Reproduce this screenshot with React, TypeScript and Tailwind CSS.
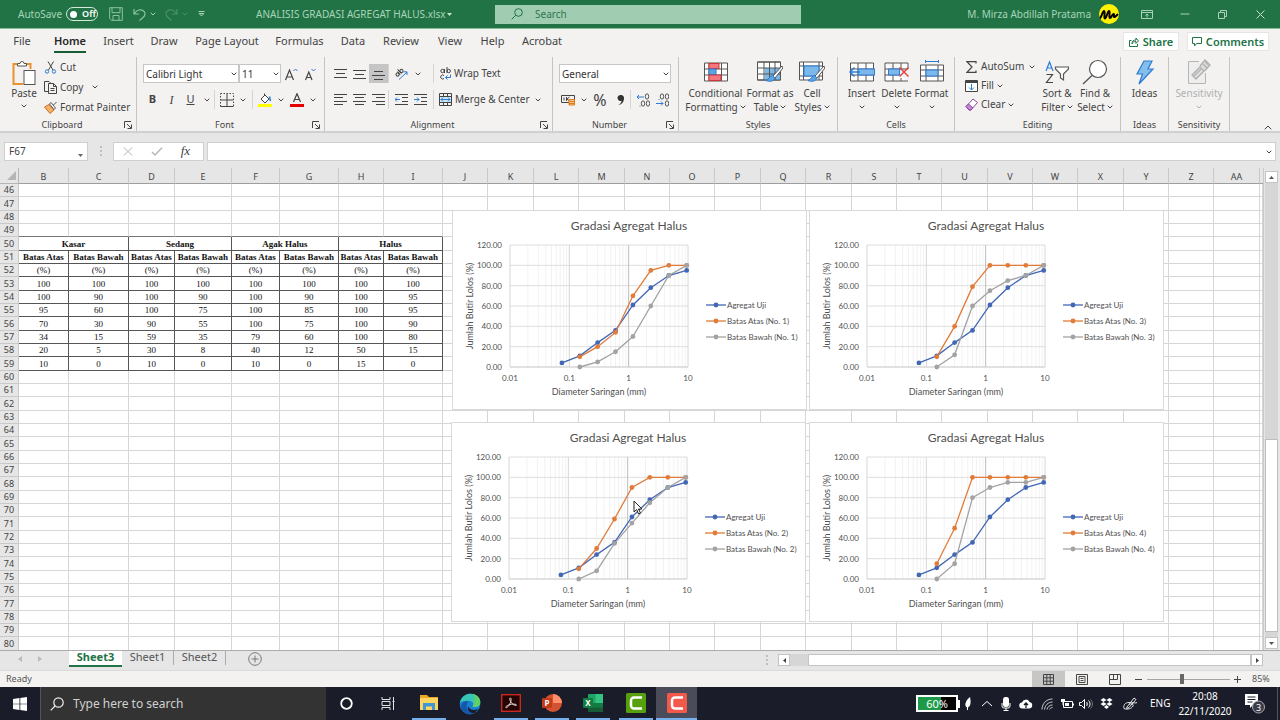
import React from 'react';

type Cell = string | number;

interface Series {
  name: string;
  color: string;
  points: [number, number][];
}

interface ChartDef {
  place: string;
  atas: number[];
  bawah: number[];
  no: number;
}

const SIEVES = [0.15, 0.3, 0.6, 1.18, 2.36, 4.75, 9.5];
const SAMPLE: [number, number][] = [
  [0.075, 4], [0.15, 11], [0.3, 24], [0.6, 36], [1.18, 61], [2.36, 78], [4.75, 90], [9.5, 95],
];

const CHARTS: ChartDef[] = [
  { no: 1, place: 'left-[452px] top-[42px]', atas: [10, 20, 34, 70, 95, 100, 100], bawah: [0, 5, 15, 30, 60, 90, 100] },
  { no: 3, place: 'left-[809px] top-[42px]', atas: [10, 40, 79, 100, 100, 100, 100], bawah: [0, 12, 60, 75, 85, 90, 100] },
  { no: 2, place: 'left-[451px] top-[254px]', atas: [10, 30, 59, 90, 100, 100, 100], bawah: [0, 8, 35, 55, 75, 90, 100] },
  { no: 4, place: 'left-[809px] top-[254px]', atas: [15, 50, 100, 100, 100, 100, 100], bawah: [0, 15, 80, 90, 95, 95, 100] },
];

const COLUMNS = [
  { id: 'B', w: 'w-[50px]' }, { id: 'C', w: 'w-[60px]' }, { id: 'D', w: 'w-[46px]' }, { id: 'E', w: 'w-[57px]' },
  { id: 'F', w: 'w-[48px]' }, { id: 'G', w: 'w-[59px]' }, { id: 'H', w: 'w-[45px]' }, { id: 'I', w: 'w-[59px]' },
  { id: 'J', w: 'w-[45px]' }, { id: 'K', w: 'w-[46px]' }, { id: 'L', w: 'w-[45px]' }, { id: 'M', w: 'w-[46px]' },
  { id: 'N', w: 'w-[45px]' }, { id: 'O', w: 'w-[45px]' }, { id: 'P', w: 'w-[46px]' }, { id: 'Q', w: 'w-[45px]' },
  { id: 'R', w: 'w-[46px]' }, { id: 'S', w: 'w-[45px]' }, { id: 'T', w: 'w-[45px]' }, { id: 'U', w: 'w-[46px]' },
  { id: 'V', w: 'w-[45px]' }, { id: 'W', w: 'w-[45px]' }, { id: 'X', w: 'w-[46px]' }, { id: 'Y', w: 'w-[45px]' },
  { id: 'Z', w: 'w-[45px]' }, { id: 'AA', w: 'w-[46px]' },
];

const FIRST_ROW = 46;
const ROWS = Array.from({ length: 35 }, (_, i) => FIRST_ROW + i);

const DATA: Record<number, Cell[]> = {
  51: ['Batas Atas', 'Batas Bawah', 'Batas Atas', 'Batas Bawah', 'Batas Atas', 'Batas Bawah', 'Batas Atas', 'Batas Bawah'],
  52: ['(%)', '(%)', '(%)', '(%)', '(%)', '(%)', '(%)', '(%)'],
  53: [100, 100, 100, 100, 100, 100, 100, 100],
  54: [100, 90, 100, 90, 100, 90, 100, 95],
  55: [95, 60, 100, 75, 100, 85, 100, 95],
  56: [70, 30, 90, 55, 100, 75, 100, 90],
  57: [34, 15, 59, 35, 79, 60, 100, 80],
  58: [20, 5, 30, 8, 40, 12, 50, 15],
  59: [10, 0, 10, 0, 10, 0, 15, 0],
};

const TABS = [
  { label: 'File', w: 'w-11' }, { label: 'Home', w: 'w-[52px]' }, { label: 'Insert', w: 'w-[45px]' },
  { label: 'Draw', w: 'w-[46px]' }, { label: 'Page Layout', w: 'w-20' }, { label: 'Formulas', w: 'w-[65px]' },
  { label: 'Data', w: 'w-[42px]' }, { label: 'Review', w: 'w-[54px]' }, { label: 'View', w: 'w-11' },
  { label: 'Help', w: 'w-[41px]' }, { label: 'Acrobat', w: 'w-[58px]' },
];

/* ---------- icons ---------- */

const Svg: React.FC<{ w: number; h: number; className?: string; children: React.ReactNode }> = ({ w, h, className, children }) => (
  <svg width={w} height={h} viewBox={`0 0 ${w} ${h}`} fill="none" stroke="#444" strokeWidth="1" className={`shrink-0 ${className || ''}`} aria-hidden="true">
    {children}
  </svg>
);

const Chevron = ({ className }: { className?: string }) => (
  <Svg w={6} h={4} className={className}><path d="M.7 .7 3 3 5.3 .7" stroke="currentColor" /></Svg>
);

const PasteIcon = () => (
  <Svg w={24} h={26}>
    <path d="M5 4H1.500v20H11" stroke="#e8912d" strokeWidth="2" />
    <path d="M14 4h4.500v5" stroke="#e8912d" strokeWidth="2" />
    <path d="M5.500 6V3.500H8a2 2 0 0 1 4 0h2.500V6z" fill="#fff" stroke="#555" />
    <rect x="12" y="10.500" width="11" height="14" fill="#fff" stroke="#555" />
  </Svg>
);

const CutIcon = () => (
  <Svg w={13} h={13}>
    <path d="M4 .5 9 9M9.500 .5 4.500 9" />
    <circle cx="3" cy="10.500" r="1.700" stroke="#2b7cd3" /><circle cx="10" cy="10.500" r="1.700" stroke="#2b7cd3" />
  </Svg>
);

const CopyIcon = () => (
  <Svg w={13} h={13}>
    <path d="M4 10.500H.5V.5H5L6.500 2" />
    <path d="M4.500 2.500h5l3 3v7h-8zM9.500 2.500v3h3M6.500 7.500h4M6.500 9.500h4" />
  </Svg>
);

const PainterIcon = () => (
  <Svg w={13} h={13}>
    <path d="M.5 6 5 3.500l5 5.500-4 3.500z" fill="#f7b066" stroke="#c8702a" />
    <path d="M5.500 3 10 8.500 11.500 7 7 1.500zM9.500 4l3-3" fill="#fff" stroke="#555" />
  </Svg>
);

const AlignLines = ({ lines }: { lines: [number, number, number][] }) => (
  <Svg w={13} h={12}>
    {lines.map(([x, y, len], i) => <path key={i} d={`M${x} ${y}.5h${len}`} />)}
  </Svg>
);

const VTop: [number, number, number][] = [[0, 1, 13], [2, 5, 9], [0, 9, 13]];
const VMid: [number, number, number][] = [[0, 2, 13], [2, 6, 9], [0, 10, 13]];
const VBottom: [number, number, number][] = [[2, 3, 9], [0, 7, 13], [2, 11, 9]];
const HLeft: [number, number, number][] = [[0, 0, 13], [0, 3, 9], [0, 7, 13], [0, 10, 9]];
const HCenter: [number, number, number][] = [[0, 0, 13], [2, 3, 9], [0, 7, 13], [2, 10, 9]];
const HRight: [number, number, number][] = [[0, 0, 13], [4, 3, 9], [0, 7, 13], [4, 10, 9]];

const IndentIcon = ({ flip }: { flip?: boolean }) => (
  <Svg w={13} h={12}>
    <path d="M0 .5h13M7 3.500h6M7 7.500h6M0 10.500h13" />
    <path d={flip ? 'M0 5.500h5M3 3.500l2 2-2 2' : 'M5 5.500H0M2 3.500l-2 2 2 2'} stroke="#2b7cd3" />
  </Svg>
);

const OrientIcon = () => (
  <Svg w={14} h={13}>
    <g transform="rotate(-45 5 6)"><circle cx="3" cy="6" r="1.600" /><path d="M4.800 4v4M6.500 2.500V8" /><circle cx="8.200" cy="6.300" r="1.600" /></g>
    <path d="M5 12.500 13 5M9.500 4.800H13V8" stroke="#2b7cd3" />
  </Svg>
);

const WrapIcon = () => (
  <Svg w={11} h={13}>
    <circle cx="2.500" cy="4" r="1.700" /><path d="M4.500 2v4M7 0v6" /><circle cx="8.700" cy="4" r="1.700" />
    <path d="M4 8.500a2 2 0 1 0 0 3" />
    <path d="M10.500 7.500v3H5.500M7.500 8.500l-2 2 2 2" stroke="#2b7cd3" />
  </Svg>
);

const MergeIcon = () => (
  <Svg w={13} h={13}>
    <path d="M.5 .5h12v12H.5zM.5 3.500h12M.5 9.500h12M4.500 .5v3M8.500 .5v3M4.500 9.500v3M8.500 9.500v3" />
    <rect x="1" y="4" width="11" height="5" fill="#cfe6f8" stroke="none" />
    <path d="M2 6.500h9M4 4.500l-2 2 2 2M9 4.500l2 2-2 2" stroke="#2b7cd3" />
  </Svg>
);

const BordersIcon = () => (
  <Svg w={14} h={14}>
    <path d="M.5 .5h13v13H.5z" strokeDasharray="1.500 1.500" />
    <path d="M7 1v12M1 7h12M.5 13.500h13" />
  </Svg>
);

const FillColorIcon = () => (
  <Svg w={14} h={14}>
    <path d="M3 6 7 2l4 4-4 4zM6.500 3V.5" fill="#fff" />
    <path d="M11.500 3.500 12.500 8" stroke="#2b7cd3" strokeWidth="1.500" />
    <rect x="0" y="11" width="14" height="3" fill="#ff0" stroke="none" />
  </Svg>
);

const FontColorIcon = () => (
  <Svg w={14} h={14}>
    <path d="M3.500 9 7 .7 10.500 9M4.500 6.500h5" strokeWidth="1.200" />
    <rect x="0" y="11" width="14" height="3" fill="#e60000" stroke="none" />
  </Svg>
);

const CurrencyIcon = () => (
  <Svg w={15} h={13}>
    <path d="M.5 2.500h13v7H.5zM3 4.500v3M5.500 4v4M8.500 4 6 6l2.500 2" />
    <path d="M8 6.500h5.500v5.500H8z" fill="#f7c48c" stroke="#e07b1a" /><path d="M8 8.500h5.500M8 10.500h5.500" stroke="#e07b1a" />
  </Svg>
);

const DecimalIcon = ({ less }: { less?: boolean }) => (
  <Svg w={14} h={14}>
    <g strokeWidth=".9">
      {less
        ? <><ellipse cx="7" cy="3.500" rx="1.700" ry="2.700" /><ellipse cx="12" cy="3.500" rx="1.700" ry="2.700" /><ellipse cx="12" cy="10.500" rx="1.700" ry="2.700" /></>
        : <><ellipse cx="11" cy="3.500" rx="1.700" ry="2.700" /><ellipse cx="7" cy="10.500" rx="1.700" ry="2.700" /><ellipse cx="12" cy="10.500" rx="1.700" ry="2.700" /></>}
    </g>
    <path d={less ? 'M1 10.500h7M6 8.500l2 2-2 2M4 6v1' : 'M8 4H1M3 2 1 4l2 2M4 12.500v1'} stroke="#2b7cd3" />
  </Svg>
);

const Brush = () => (
  <g>
    <path d="M25 6 16 16l2 2 8-10z" fill="#fff" stroke="#555" />
    <path d="M15.500 15.500c-3 0-3 4-6.500 5 3 1.500 8 1 9-2.500z" fill="#5ea4e0" stroke="#2b7cd3" />
  </g>
);

const CondIcon = () => (
  <Svg w={24} h={20}>
    <path d="M.5 1h23v18H.5zM.5 7h23M.5 13h23M5 1v18M17.500 1v18" fill="#fff" stroke="#555" />
    <rect x="5" y="1.500" width="10" height="5" fill="#f4777f" stroke="#d13438" />
    <rect x="5" y="7" width="7" height="5.500" fill="#5ea4e0" stroke="#2b7cd3" />
    <rect x="5" y="13" width="12" height="5.500" fill="#f4777f" stroke="#d13438" />
  </Svg>
);

const TableFmtIcon = () => (
  <Svg w={26} h={24}>
    <path d="M.5 2h23v18H.5z" fill="#fff" />
    <rect x="8" y="8" width="15" height="12" fill="#7db8ea" stroke="none" />
    <path d="M.5 2h23v18H.5zM.5 8h23M.5 14h23M7 2v18M12.500 2v18M18 2v18" stroke="#555" />
    <Brush />
  </Svg>
);

const CellStyleIcon = () => (
  <Svg w={26} h={24}>
    <path d="M.5 2h23v18H.5zM.5 6h23M.5 16h23M4.500 2v18M20 2v18" fill="#fff" stroke="#555" />
    <rect x="5" y="6" width="15" height="10" fill="#7db8ea" stroke="#2b7cd3" />
    <Brush />
  </Svg>
);

const InsertIcon = () => (
  <Svg w={26} h={24}>
    <path d="M1.500 3h23v18h-23zM1.500 9h23M1.500 15h23M9 3v18M17 3v18" fill="#fff" stroke="#555" />
    <rect x="9" y="9" width="16.500" height="6" fill="#7db8ea" stroke="#2b7cd3" />
    <path d="M11 12H1M5.500 7.500 1 12l4.500 4.500" stroke="#2b7cd3" strokeWidth="1.500" />
  </Svg>
);

const DeleteIcon = () => (
  <Svg w={26} h={24}>
    <path d="M1 3h23v6M24 21H1V3M1 9h23M1 15h14M9 3v18M17 3v6M17 18v3" fill="#fff" stroke="#555" />
    <rect x="4.500" y="9" width="11" height="6" fill="#7db8ea" stroke="#2b7cd3" />
    <path d="m15.500 7.500 9 9M24.500 7.500l-9 9" stroke="#e03c3c" strokeWidth="1.400" />
  </Svg>
);

const FormatIcon = () => (
  <Svg w={24} h={24}>
    <path d="M.5 5h23v16H.5zM.5 10h23M.5 16h23M6 5v16M18 5v16" fill="#fff" stroke="#555" />
    <rect x="6" y="10" width="12" height="6" fill="#7db8ea" stroke="#2b7cd3" />
    <path d="M5.500 1.500h13M5.500 0v3M18.500 0v3" stroke="#2b7cd3" />
  </Svg>
);

const SortIcon = () => (
  <Svg w={24} h={24}>
    <path d="M1 11 4.500 2 8 11M2 8h5" stroke="#2b7cd3" strokeWidth="1.200" />
    <path d="M1.500 14.500h6L1.500 22.500h6.500" strokeWidth="1.200" />
    <path d="M10.500 7h13v2l-5 5v6l-3-2v-4l-5-5z" fill="#fff" stroke="#555" strokeWidth="1.200" />
  </Svg>
);

const FindIcon = () => (
  <Svg w={26} h={26}>
    <circle cx="16" cy="10" r="8.500" fill="#fff" stroke="#555" strokeWidth="1.200" />
    <path d="M10 16.500 1 25" stroke="#555" strokeWidth="1.300" />
  </Svg>
);

const IdeasIcon = () => (
  <Svg w={20} h={25}>
    <path d="M9 1h8l-4 8h5L4 24l3.500-10H2z" fill="#83beec" stroke="#2b7cd3" strokeWidth="1.200" />
  </Svg>
);

const SensitivityIcon = () => (
  <Svg w={24} h={26}>
    <path d="M12 2.500H1.500v22h17V14" fill="#eee" stroke="#b5b5b5" />
    <path d="m5 16 8-8 4 4-8 8zM13 7l5-6 5 5-5.500 6" fill="#ddd" stroke="#b0b0b0" strokeWidth="1.300" />
    <path d="m7 17 7-7M16 5l4 4M18 2.500l3.500 3.500" stroke="#b0b0b0" strokeWidth="1.300" />
  </Svg>
);

const EraserIcon = () => (
  <Svg w={13} h={13}>
    <path d="M1 8.500 8 1l4.500 3.500L6 12H4z" fill="#fff" stroke="#8a4b9c" />
    <path d="M1 8.500 3.500 6l4.500 4L6 12H4z" fill="#c586d6" stroke="#8a4b9c" />
  </Svg>
);

const FillDownIcon = () => (
  <Svg w={13} h={12}>
    <path d="M.5 .5h12v11H.5z" fill="#fff" /><path d="M.5 2h12" strokeWidth="2" />
    <path d="M6.500 4v6M4 7.500 6.500 10 9 7.500" stroke="#2b7cd3" />
  </Svg>
);

const LauncherIcon = () => (
  <Svg w={8} h={8}><path d="M.5 7V.5H7M3 3l4 4M7.500 3.500v4h-4" /></Svg>
);

/* ---------- ribbon pieces ---------- */

const Group: React.FC<{ title: string; w: string; launcher?: boolean; children: React.ReactNode }> = ({ title, w, launcher, children }) => (
  <section className={`${w} shrink-0 flex flex-col border-r border-[#c4c4c4]`} aria-label={title}>
    <div className="h-[63px] flex items-start">{children}</div>
    <div className="pt-px flex items-center text-[9px] leading-3 text-[#444]">
      <span className="flex-1 text-center">{title}</span>
      {launcher && <button className="w-3" aria-label={`${title} settings`}><LauncherIcon /></button>}
    </div>
  </section>
);

const BigButton: React.FC<{ w: string; icon: React.ReactNode; lines: string[]; disabled?: boolean }> = ({ w, icon, lines, disabled }) => (
  <button className={`${w} shrink-0 flex flex-col items-center pt-px whitespace-nowrap leading-[14px] ${disabled ? 'text-[#b0b0b0]' : ''}`} disabled={disabled}>
    <span className="h-7 flex items-center justify-center">{icon}</span>
    <span>{lines[0]}</span>
    <span className="h-[13px] flex items-center gap-[2px]">{lines[1]}<Chevron /></span>
  </button>
);

const SmallButton: React.FC<{ icon: React.ReactNode; label: string; arrow?: string; h?: string }> = ({ icon, label, arrow, h }) => (
  <button className={`${h || 'h-5'} flex items-center gap-[3px] whitespace-nowrap`}>
    <span className="w-[13px] flex justify-center">{icon}</span>
    {label}
    {arrow && <Chevron className={arrow} />}
  </button>
);

const IconButton: React.FC<{ label: string; w?: string; children: React.ReactNode }> = ({ label, w, children }) => (
  <button className={`${w || 'w-[19px]'} h-[19px] shrink-0 flex items-center justify-center`} aria-label={label}>{children}</button>
);

const Sep = () => <span className="w-px h-[19px] bg-[#d4d4d4] shrink-0" />;

const Picker: React.FC<{ label: string; value: string; w: string }> = ({ label, value, w }) => (
  <div className={`${w} relative shrink-0`}>
    <select aria-label={label} className="w-full h-[19px] appearance-none bg-white border border-[#c6c6c6] pl-[2px] text-[10px] leading-4 text-[#333]">
      <option>{value}</option>
    </select>
    <Chevron className="absolute right-[2px] top-2 pointer-events-none" />
  </div>
);

const BigIdeas = () => (
  <button className="w-full flex flex-col items-center pt-px leading-[14px]">
    <span className="h-7 flex items-center"><IdeasIcon /></span>
    Ideas
  </button>
);

const Ribbon = () => (
  <div className="bg-[#f3f2f1] h-[79px] pt-[3px] flex text-[10px] text-[#444] border-b-2 border-[#d0d0d0] overflow-hidden">
    <Group title="Clipboard" w="w-[137px]" launcher>
      <button className="ml-3 w-6 pt-[3px] flex flex-col items-center leading-[14px]">
        <PasteIcon />
        Paste
        <Chevron className="mt-1" />
      </button>
      <div className="ml-2 flex flex-col items-start">
        <SmallButton icon={<CutIcon />} label="Cut" />
        <SmallButton icon={<CopyIcon />} label="Copy" arrow="ml-[6px]" />
        <SmallButton icon={<PainterIcon />} label="Format Painter" />
      </div>
    </Group>

    <Group title="Font" w="w-[188px]" launcher>
      <div className="pl-[6px] pt-[7px] flex flex-col gap-[7px]">
        <div className="flex items-center">
          <Picker label="Font name" value="Calibri Light" w="w-24" />
          <Picker label="Font size" value="11" w="w-[42px]" />
          <IconButton label="Grow font">
            <Svg w={14} h={14}><path d="M1.500 13 5.500 3l4 10M2.800 10h5.400" strokeWidth="1.200" /><path d="m9.500 4 2-2 2 2" stroke="#2b7cd3" /></Svg>
          </IconButton>
          <IconButton label="Shrink font">
            <Svg w={12} h={14}><path d="M1.500 13 4.800 5 8 13M2.600 10.500h4.400" strokeWidth="1.200" /><path d="m7.500 2 2 2 2-2" stroke="#2b7cd3" /></Svg>
          </IconButton>
        </div>
        <div className="flex items-center text-[11px]">
          <IconButton label="Bold"><b>B</b></IconButton>
          <IconButton label="Italic"><i className="font-['Liberation_Serif',serif] text-xs">I</i></IconButton>
          <IconButton label="Underline"><u>U</u></IconButton>
          <IconButton label="Underline style" w="w-[14px]"><Chevron /></IconButton>
          <Sep />
          <IconButton label="Borders" w="w-[23px]"><BordersIcon /></IconButton>
          <IconButton label="Border style" w="w-[10px]"><Chevron /></IconButton>
          <span className="w-1" />
          <Sep />
          <IconButton label="Fill colour" w="w-[23px]"><FillColorIcon /></IconButton>
          <IconButton label="Fill colour list" w="w-[10px]"><Chevron /></IconButton>
          <IconButton label="Font colour" w="w-[22px]"><FontColorIcon /></IconButton>
          <IconButton label="Font colour list" w="w-[10px]"><Chevron /></IconButton>
        </div>
      </div>
    </Group>

    <Group title="Alignment" w="w-[228px]" launcher>
      <div className="pl-[6px] pt-[7px] flex flex-col gap-[7px]">
        <div className="flex items-center">
          <IconButton label="Top align"><AlignLines lines={VTop} /></IconButton>
          <IconButton label="Middle align"><AlignLines lines={VMid} /></IconButton>
          <span className="bg-[#c5c5c5]"><IconButton label="Bottom align"><AlignLines lines={VBottom} /></IconButton></span>
          <Sep />
          <IconButton label="Orientation" w="w-6"><OrientIcon /></IconButton>
          <IconButton label="Orientation list" w="w-[10px]"><Chevron /></IconButton>
          <span className="w-[10px]" />
          <Sep />
          <button className="ml-[6px] flex items-center gap-[3px] whitespace-nowrap"><WrapIcon />Wrap Text</button>
        </div>
        <div className="flex items-center">
          <IconButton label="Align left"><AlignLines lines={HLeft} /></IconButton>
          <IconButton label="Align centre"><AlignLines lines={HCenter} /></IconButton>
          <IconButton label="Align right"><AlignLines lines={HRight} /></IconButton>
          <Sep />
          <IconButton label="Decrease indent" w="w-6"><IndentIcon /></IconButton>
          <IconButton label="Increase indent" w="w-[14px]"><IndentIcon flip /></IconButton>
          <span className="w-[6px]" />
          <Sep />
          <button className="ml-[5px] flex items-center gap-[3px] whitespace-nowrap"><MergeIcon />Merge &amp; Center<Chevron className="ml-[2px]" /></button>
        </div>
      </div>
    </Group>

    <Group title="Number" w="w-[126px]" launcher>
      <div className="pl-[6px] pt-[7px] flex flex-col gap-[7px]">
        <Picker label="Number format" value="General" w="w-28" />
        <div className="flex items-center">
          <IconButton label="Accounting format"><CurrencyIcon /></IconButton>
          <IconButton label="Accounting list" w="w-[11px]"><Chevron /></IconButton>
          <IconButton label="Percent" w="w-[22px]"><span className="text-base leading-4">%</span></IconButton>
          <IconButton label="Comma">
            <Svg w={8} h={12}><path d="M4 1a3 3 0 1 0 .5 5.800C4.500 8.500 3.500 10 1.500 11 5 10.500 7 7.500 7 4.500A3 3 0 0 0 4 1z" fill="#333" stroke="none" /></Svg>
          </IconButton>
          <Sep />
          <IconButton label="Increase decimal" w="w-6"><DecimalIcon /></IconButton>
          <IconButton label="Decrease decimal" w="w-[14px]"><DecimalIcon less /></IconButton>
        </div>
      </div>
    </Group>

    <Group title="Styles" w="w-[159px]">
      <BigButton w="w-[73px]" icon={<CondIcon />} lines={['Conditional', 'Formatting']} />
      <BigButton w="w-9" icon={<TableFmtIcon />} lines={['Format as', 'Table']} />
      <BigButton w="w-12" icon={<CellStyleIcon />} lines={['Cell', 'Styles']} />
    </Group>

    <Group title="Cells" w="w-[117px]">
      <span className="w-[6px]" />
      <BigButton w="w-[35px]" icon={<InsertIcon />} lines={['Insert', '']} />
      <BigButton w="w-[35px]" icon={<DeleteIcon />} lines={['Delete', '']} />
      <BigButton w="w-[35px]" icon={<FormatIcon />} lines={['Format', '']} />
    </Group>

    <Group title="Editing" w="w-[166px]">
      <div className="w-[80px] pl-[10px] flex flex-col items-start">
        <SmallButton h="h-[19px]" label="AutoSum" arrow="ml-[2px]" icon={<Svg w={11} h={12}><path d="M10 2.500V.6H1L6 6l-5 5.400h9V9.500" strokeWidth="1.200" /></Svg>} />
        <SmallButton h="h-[19px]" label="Fill" icon={<FillDownIcon />} arrow="ml-0" />
        <SmallButton h="h-[19px]" label="Clear" icon={<EraserIcon />} arrow="ml-0" />
      </div>
      <BigButton w="w-11" icon={<SortIcon />} lines={['Sort &', 'Filter']} />
      <BigButton w="w-8" icon={<FindIcon />} lines={['Find &', 'Select']} />
    </Group>

    <Group title="Ideas" w="w-12">
      <BigIdeas />
    </Group>

    <Group title="Sensitivity" w="w-[61px]">
      <BigButton w="w-[60px]" icon={<SensitivityIcon />} lines={['Sensitivity', '']} disabled />
    </Group>

    <button className="ml-auto self-end mr-2 mb-px" aria-label="Collapse ribbon">
      <Svg w={8} h={5}><path d="m.7 4.300 3.300-3.300 3.300 3.300" /></Svg>
    </button>
  </div>
);

/* ---------- window chrome ---------- */

const TitleBar = () => (
  <header className="h-7 bg-[#217346] text-[#a9d3b9] text-[10px] flex items-center">
    <label className="ml-[18px] flex items-center gap-1">
      <span>AutoSave</span>
      <span className="relative w-8 h-[14px] rounded-full border border-[#d5eadd] flex items-center text-white">
        <input type="checkbox" className="absolute inset-0 opacity-0" />
        <span className="ml-[3px] w-[7px] h-[7px] rounded-full bg-white" />
        <span className="ml-[5px] text-[9px] leading-3 font-semibold">Off</span>
      </span>
    </label>
    <button className="ml-[11px]" aria-label="Save">
      <Svg w={14} h={14}><path d="M.7 .7h12.600v12.600H2.500L.7 11.500zM3 .7v5h8v-5M4 13v-4.500h6V13" stroke="#8cc3a0" /></Svg>
    </button>
    <button className="ml-[10px] flex items-center gap-1" aria-label="Undo">
      <Svg w={13} h={13}><path d="M1 1v5h5M1.500 5.500C4 1.500 8 1 10.500 3s1.500 5-.5 6.500L6.500 12.500" stroke="#8cc3a0" strokeWidth="1.200" /></Svg>
      <Chevron />
    </button>
    <button className="ml-[9px] flex items-center gap-1 text-[#4b9168]" aria-label="Redo">
      <Svg w={13} h={13}><path d="M12 1v5H7M11.500 5.500C9 1.500 5 1 2.500 3S1 8 3 9.500l3.500 3" stroke="#4b9168" strokeWidth="1.200" /></Svg>
      <Chevron />
    </button>
    <button className="ml-[10px]" aria-label="Customise toolbar">
      <Svg w={7} h={6}><path d="M.5 .5h6M1.200 2.500h4.600L3.500 5z" stroke="#a9d3b9" /></Svg>
    </button>
    <div className="ml-[51px] w-[196px] flex items-center justify-between whitespace-nowrap">
      <span>ANALISIS GRADASI AGREGAT HALUS.xlsx</span>
      <Svg w={5} h={3}><path d="M0 0h5L2.500 3z" fill="#c5e3d0" stroke="none" /></Svg>
    </div>
    <label className="ml-[43px] w-[306px] h-[19px] bg-[#a0ccb1] flex items-center pl-4">
      <Svg w={12} h={12}><circle cx="7.500" cy="4.500" r="3.800" stroke="#217346" /><path d="M4.700 7.300 .7 11.300" stroke="#217346" /></Svg>
      <input className="ml-3 flex-1 min-w-0 bg-transparent outline-none placeholder:text-[#30774f] placeholder:opacity-100" placeholder="Search" aria-label="Search" />
    </label>
    <div className="ml-auto flex items-center">
      <span className="whitespace-nowrap">M. Mirza Abdillah Pratama</span>
      <Svg w={20} h={20} className="ml-2">
        <circle cx="10" cy="10" r="10" fill="#fff200" stroke="none" />
        <path d="M1 14.500C3 12 3.500 7 5 7s-.5 7.500 1 7.500S8.500 7 10 7s-.5 7 1 7 2-4 3.500-4-.5 3.500 1 3 2-1.500 3.500-3" stroke="#000" strokeWidth="2" />
      </Svg>
      <button className="ml-[22px] w-3" aria-label="Ribbon display options">
        <Svg w={12} h={9}><path d="M.5 .5h11v8H.5zM.5 2.500h11M6 7.500V4M4.500 5.500 6 4l1.500 1.500" stroke="#a9d3b9" /></Svg>
      </button>
      <button className="ml-[27px] w-[10px]" aria-label="Minimise"><Svg w={10} h={2}><path d="M.5 1h9" stroke="#a9d3b9" /></Svg></button>
      <button className="ml-[28px] w-[9px]" aria-label="Restore"><Svg w={9} h={9}><path d="M.5 2.500h6v6h-6zM2.500 2.500v-2h6v6h-2" stroke="#a9d3b9" /></Svg></button>
      <button className="ml-[29px] mr-[15px] w-[9px]" aria-label="Close"><Svg w={9} h={9}><path d="m.5 .5 8 8M8.500 .5l-8 8" stroke="#c5e3d0" /></Svg></button>
    </div>
  </header>
);

const TabBar = () => (
  <nav className="h-[26px] bg-[#f3f2f1] border-t border-[#8dbb9e] flex items-center text-[11px] leading-[18px] text-[#444]">
    {TABS.map(t => (
      <button key={t.label} className={`${t.w} h-full flex justify-center whitespace-nowrap`}>
        <span className={t.label === 'Home' ? 'h-6 pt-[3px] font-semibold text-[#262626] border-b-2 border-[#185c37]' : 'h-6 pt-[3px]'}>{t.label}</span>
      </button>
    ))}
    <div className="ml-auto mr-[11px] flex gap-2 font-semibold text-[#217346]">
      <button className="w-[56px] h-[19px] bg-white border border-[#e5e5e5] flex items-center justify-center gap-1">
        <Svg w={10} h={10}><path d="M2.500 3.500h-2v6h8V7M3 7c0-3 1.500-4 4-4V1l2.500 3L7 6.500v-2C5 4.500 4 5 3 7z" stroke="#217346" /></Svg>
        Share
      </button>
      <button className="w-[82px] h-[19px] bg-white border border-[#e5e5e5] flex items-center justify-center gap-1">
        <Svg w={10} h={10}><path d="M.5 .5h9v6H4.500l-2 2.500V6.500h-2z" stroke="#217346" /></Svg>
        Comments
      </button>
    </div>
  </nav>
);

const FormulaBar = () => (
  <div className="h-[35px] bg-[#e6e6e6] flex items-center pl-1 pr-1 pt-px text-[11px] text-[#444]">
    <div className="relative w-[84px]">
      <input className="w-full h-[19px] bg-white border border-[#cfcfcf] pl-1 text-[10px] outline-none" defaultValue="F67" aria-label="Name box" />
      <Svg w={5} h={3} className="absolute right-[5px] top-3"><path d="M0 0h5L2.500 3z" fill="#666" stroke="none" /></Svg>
    </div>
    <Svg w={2} h={10} className="ml-3"><path d="M1 0v10" stroke="#999" strokeDasharray="2 2" /></Svg>
    <div className="ml-[11px] w-[91px] h-[19px] bg-white border border-[#cfcfcf] flex items-center justify-around pr-1">
      <button aria-label="Cancel"><Svg w={10} h={9}><path d="m.7 .5 8.600 8M9.300 .5l-8.600 8" stroke="#b5b5b5" /></Svg></button>
      <button aria-label="Enter"><Svg w={12} h={9}><path d="m1 5 3 3L11 .7" stroke="#b5b5b5" strokeWidth="1.400" /></Svg></button>
      <button className="font-['Liberation_Serif',serif] italic text-[13px] leading-4" aria-label="Insert function">fx</button>
    </div>
    <div className="relative ml-[3px] flex-1">
      <input className="block w-full h-[19px] bg-white border border-[#cfcfcf] outline-none" aria-label="Formula" />
      <Chevron className="absolute right-1 top-2" />
    </div>
  </div>
);

/* ---------- sheet ---------- */

const PLOT = { left: 58, right: 236, top: 35, bottom: 157 };
const DECADE = (PLOT.right - PLOT.left) / 3;
const px = (v: number) => PLOT.left + (Math.log10(v) + 2) * DECADE;
const py = (v: number) => PLOT.bottom - (v / 120) * (PLOT.bottom - PLOT.top);

const GradationChart: React.FC<{ def: ChartDef }> = ({ def }) => {
  const series: Series[] = [
    { name: 'Agregat Uji', color: '#4267b5', points: SAMPLE },
    { name: `Batas Atas (No. ${def.no})`, color: '#e07b39', points: SIEVES.map((s, i) => [s, def.atas[i]]) },
    { name: `Batas Bawah (No. ${def.no})`, color: '#a3a3a3', points: SIEVES.map((s, i) => [s, def.bawah[i]]) },
  ];
  const minors = [0.01, 0.1, 1].flatMap(d => [2, 3, 4, 5, 6, 7, 8, 9].map(m => d * m));

  return (
    <svg width="355" height="200" viewBox="1 1 353 198" className={`absolute ${def.place} bg-white border border-[#d9d9d9] font-['Lato',sans-serif] text-[8px]`} fill="#505050">
      <text x="177" y="20" textAnchor="middle" className="text-[12px]">Gradasi Agregat Halus</text>
      {minors.map(m => <path key={m} d={`M${px(m)} ${PLOT.top}V${PLOT.bottom}`} stroke="#f2f2f2" />)}
      {[0, 20, 40, 60, 80, 100, 120].map(v => (
        <g key={v}>
          <path d={`M${PLOT.left} ${py(v)}H${PLOT.right}`} stroke={v === 0 ? '#c4c4c4' : '#dedede'} />
          <text x="50" y={py(v) + 3} textAnchor="end">{v.toFixed(2)}</text>
        </g>
      ))}
      {[0.01, 0.1, 1, 10].map(v => (
        <g key={v}>
          <path d={`M${px(v)} ${PLOT.top}V${PLOT.bottom}`} stroke={v === 1 ? '#bdbdbd' : '#d6d6d6'} />
          <text x={px(v)} y="171" textAnchor="middle">{v}</text>
        </g>
      ))}
      {series.map((s, i) => (
        <g key={s.name}>
          <polyline points={s.points.map(([x, y]) => `${px(x)},${py(y)}`).join(' ')} fill="none" stroke={s.color} strokeWidth="1.300" />
          {s.points.map(([x, y]) => <circle key={x} cx={px(x)} cy={py(y)} r="2.400" fill={s.color} />)}
          <path d={`M254 ${95 + i * 16}h20`} stroke={s.color} strokeWidth="1.300" />
          <circle cx="264" cy={95 + i * 16} r="2.400" fill={s.color} />
          <text x="275" y={98 + i * 16}>{s.name}</text>
        </g>
      ))}
      <text x="147" y="185" textAnchor="middle" className="text-[9px]">Diameter Saringan (mm)</text>
      <text transform="translate(21 96) rotate(-90)" textAnchor="middle" className="text-[9px]">Jumlah Butir Lolos (%)</text>
    </svg>
  );
};

const SheetRow: React.FC<{ row: number }> = ({ row }) => {
  const values = DATA[row];
  const ruled = row >= 50 && row <= 59;
  // 85% zoom puts a row at 13 1/3 px, so every third one is a pixel taller
  const height = (row - FIRST_ROW) % 3 === 1 ? 'h-[14px]' : 'h-[13px]';

  return (
    <tr className={height}>
      <th scope="row" className="bg-[#e6e6e6] border-r border-b border-[#c9c9c9] font-normal text-[9px] leading-3 text-[#444] font-['Noto_Sans',sans-serif]">{row}</th>
      {row === 50 && ['Kasar', 'Sedang', 'Agak Halus', 'Halus'].map(name => (
        <th key={name} colSpan={2} className="border-r border-b border-[#555]">{name}</th>
      ))}
      {row !== 50 && COLUMNS.slice(0, 8).map((c, i) => (
        <td
          key={c.id}
          className={ruled
            ? `border-r border-b border-[#555] whitespace-nowrap ${row === 51 ? 'font-bold' : ''}`
            : `border-r border-b border-r-[#d6d6d6] ${row === 49 ? 'border-b-[#777]' : 'border-b-[#d6d6d6]'}`}
        >
          {values && values[i]}
        </td>
      ))}
      {COLUMNS.slice(8).map(c => <td key={c.id} className="border-r border-b border-[#d6d6d6]" />)}
      <td className="border-r border-b border-[#d6d6d6]" />
    </tr>
  );
};

const Sheet = () => (
  <main className="flex-1 flex bg-[#e6e6e6]">
    <div className="relative flex-1 min-w-0 overflow-hidden bg-white">
      <table className="w-full -mb-px table-fixed border-separate border-spacing-0 text-center font-['Liberation_Serif',serif] text-[9px] leading-3 text-[#111]">
        <colgroup>
          <col className="w-[19px]" />
          {COLUMNS.map(c => <col key={c.id} className={c.w} />)}
          <col />
        </colgroup>
        <thead>
          <tr className="h-4 bg-[#e6e6e6] font-['Noto_Sans',sans-serif] text-[#444]">
            <th className="border-r border-b border-[#b5b5b5]" aria-label="Select all">
              <Svg w={9} h={9} className="ml-auto mr-[2px]"><path d="M9 0v9H0z" fill="#b5b5b5" stroke="none" /></Svg>
            </th>
            {COLUMNS.map(c => <th key={c.id} scope="col" className="border-r border-b border-r-[#c9c9c9] border-b-[#9e9e9e] font-normal pt-[3px]">{c.id}</th>)}
            <th className="border-b border-[#9e9e9e]" />
          </tr>
        </thead>
        <tbody>
          {ROWS.map(r => <SheetRow key={r} row={r} />)}
        </tbody>
      </table>
      {CHARTS.map(c => <GradationChart key={c.no} def={c} />)}
      <Svg w={10} h={15} className="absolute left-[633px] top-[332px]">
        <path d="M1 1v11l2.700-2.500L5.500 14l2-1-2-4H9z" fill="#fff" stroke="#222" />
      </Svg>
    </div>
    <div className="w-[17px] pt-[3px] pl-px pr-[2px] flex flex-col border-l border-[#c9c9c9]">
      <button className="h-3 bg-white border border-[#c4c4c4] flex items-center justify-center" aria-label="Scroll up">
        <Svg w={5} h={3}><path d="M0 3h5L2.500 0z" fill="#555" stroke="none" /></Svg>
      </button>
      <div className="flex-1 bg-[#d6d6d6] flex flex-col pt-[256px]">
        <div className="h-[193px] bg-white border border-[#bdbdbd]" />
      </div>
      <button className="h-3 mb-px bg-white border border-[#c4c4c4] flex items-center justify-center" aria-label="Scroll down">
        <Svg w={5} h={3}><path d="M0 0h5L2.500 3z" fill="#555" stroke="none" /></Svg>
      </button>
    </div>
  </main>
);

const SheetTabs = () => (
  <div className="h-5 bg-[#e6e6e6] border-t border-[#ababab] flex items-start text-[11px] leading-3 text-[#555]">
    <div className="w-[69px] h-4 flex items-center pl-[18px] gap-4">
      <Svg w={4} h={6}><path d="M4 0v6L0 3z" fill="#bbb" stroke="none" /></Svg>
      <Svg w={4} h={6}><path d="M0 0v6l4-3z" fill="#bbb" stroke="none" /></Svg>
    </div>
    <button className="w-[53px] h-4 pb-[2px] bg-white border-b-2 border-[#217346] font-bold text-[#217346]">Sheet3</button>
    <button className="w-[52px] h-[14px] pb-[2px] border-r border-[#ababab]">Sheet1</button>
    <button className="w-[52px] h-[14px] pb-[2px] border-r border-[#ababab]">Sheet2</button>
    <button className="ml-[22px] mt-px" aria-label="New sheet">
      <Svg w={14} h={14}><circle cx="7" cy="7" r="6.300" stroke="#777" /><path d="M7 3.500v7M3.500 7h7" stroke="#777" /></Svg>
    </button>
    <div className="ml-auto mr-[17px] h-[18px] flex items-center">
      <Svg w={2} h={10}><path d="M1 0v10" stroke="#999" strokeDasharray="2 2" /></Svg>
      <button className="ml-[10px] w-3 h-3 bg-white border border-[#c4c4c4] flex items-center justify-center" aria-label="Scroll left">
        <Svg w={3} h={5}><path d="M3 0v5L0 2.500z" fill="#444" stroke="none" /></Svg>
      </button>
      <div className="w-[461px] h-3 bg-[#d6d6d6] pl-[18px]"><div className="h-full bg-white border border-[#c4c4c4]" /></div>
      <button className="w-3 h-3 bg-white border border-[#c4c4c4] flex items-center justify-center" aria-label="Scroll right">
        <Svg w={3} h={5}><path d="M0 0v5l3-2.500z" fill="#444" stroke="none" /></Svg>
      </button>
    </div>
  </div>
);

const StatusBar = () => (
  <div className="h-[17px] bg-[#f3f2f1] border-t border-[#dadada] flex items-center text-[9px] text-[#555]">
    <span className="ml-[6px]">Ready</span>
    <div className="ml-auto flex items-center h-full">
      <button className="w-[33px] h-full bg-[#c6c6c6] flex items-center justify-center" aria-label="Normal view">
        <Svg w={11} h={11}><path d="M.5 .5h10v10H.5zM.5 3.800h10M.5 7.200h10M3.800 .5v10M7.200 .5v10" /></Svg>
      </button>
      <button className="w-[34px] flex justify-center" aria-label="Page layout view">
        <Svg w={12} h={11}><path d="M.5 .5h11v10H.5zM3 2.500h6v6H3zM4.500 4.500h3M4.500 6.500h3" /></Svg>
      </button>
      <button className="w-8 flex justify-center" aria-label="Page break view">
        <Svg w={12} h={11}><path d="M.5 .5h11v10H.5zM4.500 .5v5M8.500 .5v5M.5 5.500h8" /></Svg>
      </button>
      <button className="ml-1 w-[7px]" aria-label="Zoom out"><Svg w={7} h={7}><path d="M0 3.500h7" /></Svg></button>
      <label className="relative ml-[5px] w-[83px] h-[10px] flex items-center">
        <input type="range" min="10" max="160" defaultValue="73" className="absolute inset-0 w-full opacity-0" aria-label="Zoom" />
        <span className="w-full h-px bg-[#a5a5a5]" />
        <span className="absolute left-[33px] top-0 w-1 h-[10px] bg-[#666]" />
      </label>
      <button className="ml-1 w-[7px]" aria-label="Zoom in"><Svg w={7} h={7}><path d="M0 3.500h7M3.500 0v7" /></Svg></button>
      <span className="ml-[11px] w-[28px]">85%</span>
    </div>
  </div>
);

/* ---------- taskbar ---------- */

const TaskApp: React.FC<{ label: string; running?: boolean; active?: boolean; children: React.ReactNode }> = ({ label, running, active, children }) => (
  <button className={`w-[41px] h-full flex flex-col items-center ${active ? 'bg-[#4b4c5a]' : ''}`} aria-label={label}>
    <span className="flex-1 flex items-center">{children}</span>
    {running && <span className={`h-[2px] bg-[#76b0ec] ${active ? 'w-full' : 'w-[34px]'}`} />}
  </button>
);

const Camtasia = ({ color }: { color: string }) => (
  <Svg w={20} h={20}>
    <rect width="20" height="20" rx="1.500" fill={color} stroke="none" />
    <path d="M16 4.500H8A3 3 0 0 0 5 7.500v5a3 3 0 0 0 3 3h8" stroke="#fff" strokeWidth="2.500" />
  </Svg>
);

const Taskbar = () => (
  <footer className="h-[33px] bg-[#1a1d29] text-white flex items-center">
    <button className="w-10 h-full flex items-center justify-center" aria-label="Start">
      <Svg w={14} h={14}><path d="M0 2 6.500 1v5.700H0zM7.300 .9 14 0v6.700H7.300zM0 7.300h6.500V13L0 12zM7.300 7.300H14V14l-6.700-.9z" fill="#fff" stroke="none" /></Svg>
    </button>
    <label className="w-[286px] h-full bg-[#333334] border-l border-[#555] flex items-center pl-[9px]">
      <Svg w={14} h={14}><circle cx="8.500" cy="5.500" r="4.700" stroke="#eee" strokeWidth="1.200" /><path d="M5 9 .7 13.300" stroke="#eee" strokeWidth="1.200" /></Svg>
      <input className="ml-[9px] flex-1 min-w-0 bg-transparent outline-none text-xs placeholder:text-[#d0d0d0] placeholder:opacity-100" placeholder="Type here to search" aria-label="Type here to search" />
    </label>
    <button className="w-[41px] h-full flex items-center justify-center" aria-label="Cortana">
      <Svg w={13} h={13}><circle cx="6.500" cy="6.500" r="5.300" stroke="#fff" strokeWidth="1.800" /></Svg>
    </button>
    <button className="w-[41px] h-full flex items-center justify-center" aria-label="Task view">
      <Svg w={14} h={13}><path d="M1 0v2.500h8V0M1 13v-2.500h8V13M1 4.500h8v4H1zM12.500 0v13M11.500 4.500h2" stroke="#e5e5e5" /></Svg>
    </button>
    <TaskApp label="File Explorer" running>
      <Svg w={20} h={17}>
        <path d="M1 1h7l2 2h9v13H1z" fill="#e9a825" stroke="none" /><path d="M1 4h18v12H1z" fill="#fcd462" stroke="none" />
        <path d="M4 16V9h12v7h-3v-3.500H7V16z" fill="#3f97d6" stroke="none" />
      </Svg>
    </TaskApp>
    <TaskApp label="Edge">
      <Svg w={22} h={22}>
        <circle cx="11" cy="11" r="10.300" fill="#1b7fd1" stroke="none" />
        <path d="M1 10C2 3 8 .5 12 .8c6 .5 9.500 5 9.300 9-.3 4-5 5.200-7.800 3.700 1.500-2 .8-5-2.500-5.500C7 7.500 2.500 8 1 10z" fill="#38c6b4" stroke="none" />
        <path d="M14 1c5 .8 7.600 5 7.300 8.800-.3 4-5 5.200-7.800 3.700C16 10 17 5 14 1z" fill="#5fd068" stroke="none" />
        <path d="M8 11c-1.500 4 2 8.500 7 9.400-6 2.500-12-1-13-7C3 9 6 8 9.500 8.300 8.700 9 8.300 10 8 11z" fill="#1557a8" stroke="none" />
        <path d="M9.500 13c0 3.500 5 5 9.500 3-1 2-2.500 3.500-4 4.400-5-.4-7-4.400-5.500-7.400z" fill="#1a1d29" stroke="none" />
      </Svg>
    </TaskApp>
    <TaskApp label="Acrobat" running>
      <Svg w={20} h={18}>
        <rect x=".7" y=".7" width="18.600" height="16.600" fill="#260404" stroke="#c8281e" strokeWidth="1.400" />
        <path d="M9.300 4c1.500 0 .8 3.500-.5 6s-3.300 4.500-4 3.500 3-3 5.500-3.300 5.500 0 5.200 1-4-.5-5.500-3S8.300 4 9.300 4z" stroke="#f3e5e5" strokeWidth=".9" />
      </Svg>
    </TaskApp>
    <TaskApp label="PowerPoint" running>
      <Svg w={20} h={20}>
        <circle cx="11" cy="10" r="9" fill="#d35230" stroke="none" /><path d="M11 1a9 9 0 0 1 9 9h-9z" fill="#ff8f6b" stroke="none" />
        <rect x="0" y="5" width="10" height="10" rx="1" fill="#c13b1b" stroke="none" />
        <text x="5" y="13" textAnchor="middle" fill="#fff" stroke="none" className="text-[8px] font-bold">P</text>
      </Svg>
    </TaskApp>
    <TaskApp label="Excel" running>
      <Svg w={20} h={18}>
        <rect x="5" y="0" width="15" height="18" rx="1" fill="#21a366" stroke="none" /><rect x="12.500" y="0" width="7.500" height="9" fill="#33c481" stroke="none" />
        <rect x="5" y="9" width="15" height="9" fill="#107c41" stroke="none" /><rect x="5" y="13.500" width="15" height="4.500" fill="#185c37" stroke="none" />
        <rect x="0" y="4" width="10" height="10" rx="1" fill="#107c41" stroke="none" />
        <text x="5" y="12" textAnchor="middle" fill="#fff" stroke="none" className="text-[8px] font-bold">X</text>
      </Svg>
    </TaskApp>
    <span className="w-[2px]" />
    <TaskApp label="Camtasia" running><Camtasia color="#56a00e" /></TaskApp>
    <TaskApp label="Camtasia Recorder" running active><Camtasia color="#f2594b" /></TaskApp>

    <div className="ml-auto flex items-center">
      <span className="w-[42px] h-[17px] border-2 border-white bg-linear-to-r from-[#1d9a48] from-60% to-black to-60% flex items-center justify-center text-[11px] leading-3">60%</span>
      <span className="w-[2px] h-2 bg-white" />
      <Svg w={8} h={13} className="ml-1"><path d="M6 0C1 4 0 9 3 10.500V13h1v-2.500C7 9 7 5 6 0z" fill="#fff" stroke="none" /></Svg>
      <button className="ml-[9px]" aria-label="Show hidden icons"><Svg w={12} h={7}><path d="m1 6 5-4.500L11 6" stroke="#fff" /></Svg></button>
      <Svg w={10} h={14} className="ml-2"><rect x="2" y="0" width="6" height="10" rx="2.500" fill="#fff" stroke="none" /><path d="M1 6v3a2 2 0 0 0 2 2h4a2 2 0 0 0 2-2V6M5 11v2M2.500 13.500h5" stroke="#fff" /></Svg>
      <Svg w={14} h={11} className="ml-2"><path d="M3.500 10.500a3 3 0 0 1-.5-6A4 4 0 0 1 10.500 4a3.300 3.300 0 0 1 0 6.500z" fill="#fff" stroke="none" /><path d="M7 10V5M5 7l2-2 2 2" stroke="#1a1d29" strokeWidth="1.300" /></Svg>
      <Svg w={12} h={12} className="ml-2"><path d="M1 11.500C1 6 5 1 11.500 1M3.500 11.500C4 7.500 7 4 11.500 4M6 11.500C6.500 9 8.500 7 11.500 7M8.500 11.500c.5-1 1.500-2 3-2" stroke="#c9c9c9" /></Svg>
      <Svg w={14} h={12} className="ml-[7px]"><path d="M3.500 3.500h9v6h-9zM13.500 5.500v2" stroke="#fff" /><path d="M5 5h4v3H5zM1 1h4v3H1z" fill="#fff" stroke="none" /><path d="M3 4v3" stroke="#fff" /></Svg>
      <Svg w={14} h={12} className="ml-[5px]"><path d="M.5 4.500h2L5.500 1.500v9l-3-3h-2zM7.500 4c1 1 1 3 0 4M9.500 2.500c2 2 2 5 0 7" stroke="#fff" /><path d="M11.500 1.500c2.500 2.500 2.500 6.500 0 9" stroke="#777" /></Svg>
      <Svg w={13} h={11} className="ml-[7px]"><path d="m3.500 0 3 2-3 2-3-2zM9.500 0l3 2-3 2-3-2zM3.500 4l3 2-3 2-3-2zM9.500 4l3 2-3 2-3-2zM6.500 7l2.500 2-2.500 2L4 9z" fill="#fff" stroke="none" /></Svg>
      <Svg w={15} h={13} className="ml-[10px]"><path d="M4 10 11 1l2 1.500-7 8-2.500 1zM1 11.500c-1-3 1-6 5-6s7 1 8 0M1 11.500c3 1.500 8 0 9-2.500s-3-3-4-1" stroke="#e5e5e5" /></Svg>
      <span className="ml-3 w-5 text-[10px]">ENG</span>
      <div className="ml-[6px] w-[58px] text-center text-[10px] leading-[15px] whitespace-nowrap">
        <div>20:08</div>
        <div>22/11/2020</div>
      </div>
      <button className="relative ml-[11px] mr-3 w-[20px] h-[20px]" aria-label="Notifications">
        <Svg w={20} h={20}>
          <path d="M0 0h13v11H8l-3 3v-3H0z" fill="#fff" stroke="none" /><path d="M2.500 3h8M2.500 5.500h8M2.500 8h5" stroke="#1a1d29" />
          <circle cx="13.500" cy="13" r="6" fill="#3a3c47" stroke="#aaa" />
          <text x="13.500" y="16.500" textAnchor="middle" fill="#fff" stroke="none" className="text-[9px]">3</text>
        </Svg>
      </button>
      <span className="w-px h-[33px] mr-[2px] bg-[#555]" />
    </div>
  </footer>
);

export default function App() {
  return (
    <div className="min-h-screen flex flex-col overflow-hidden font-['Noto_Sans',sans-serif]">
      <TitleBar />
      <TabBar />
      <Ribbon />
      <FormulaBar />
      <Sheet />
      <SheetTabs />
      <StatusBar />
      <Taskbar />
    </div>
  );
}
